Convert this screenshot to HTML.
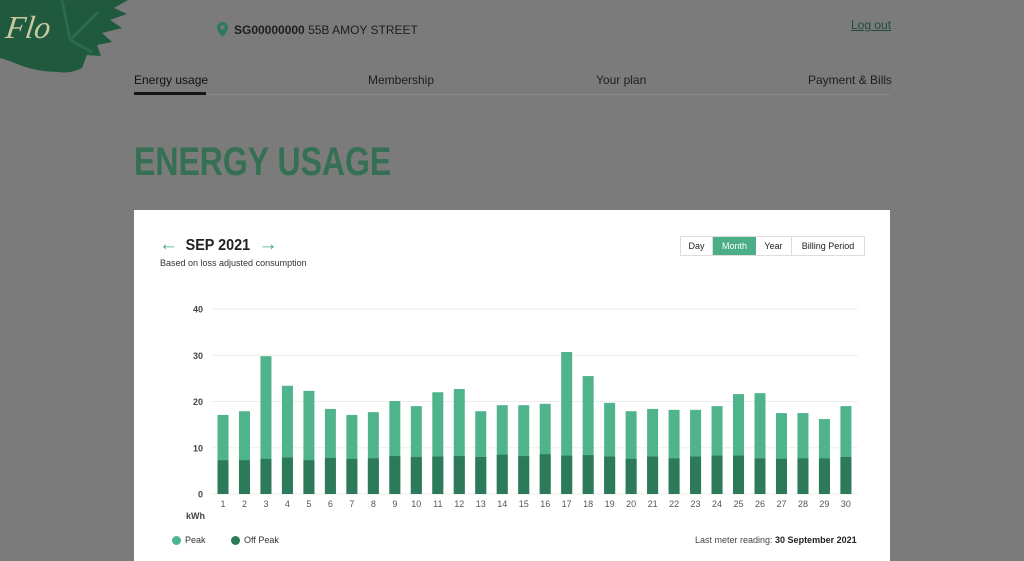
<!DOCTYPE html>
<html><head><meta charset="utf-8"><style>
*{margin:0;padding:0;box-sizing:border-box}
body{width:1024px;height:561px;overflow:hidden;background:#7b7b7b;font-family:"Liberation Sans",sans-serif;position:relative;color:#222}
.a{position:absolute;white-space:nowrap}
</style></head><body>
<svg class="a" style="left:0;top:0" width="130" height="75" viewBox="0 0 130 75">
<path d="M0 0 H128 L114 8 L127 14 L110 20 L122 28 L102 33 L112 42 L97 45 L101 56 L87 55 L82 68 Q70 74 58 72 Q40 72 22 66 Q8 60 0 58 Z" fill="#1f5a3e"/>
<path d="M62 0 L70 40 M70 40 L98 12 M70 40 L92 52" stroke="#2a6a4d" stroke-width="3" fill="none"/>
<text x="10" y="38" font-family="Liberation Serif,serif" font-style="italic" font-size="32" fill="#c9c7a0" transform="skewX(-8)">Flo</text>
</svg>
<svg class="a" style="left:217px;top:22px" width="11" height="15" viewBox="0 0 11 15"><path d="M5.5 0C2.5 0 0 2.4 0 5.4 0 9.5 5.5 15 5.5 15S11 9.5 11 5.4C11 2.4 8.5 0 5.5 0z" fill="#2f7a5c"/><circle cx="5.5" cy="5.3" r="2" fill="#7b7b7b"/></svg>
<div class="a" style="left:234px;top:23px;font-size:12px;color:#1e1e1e"><b>SG00000000</b> 55B AMOY STREET</div>
<div class="a" style="left:851px;top:18px;font-size:12px;color:#1f4d38;text-decoration:underline">Log out</div>
<div class="a" style="left:134px;top:73px;font-size:12px;color:#111">Energy usage</div>
<div class="a" style="left:368px;top:73px;font-size:12px;color:#1e1e1e">Membership</div>
<div class="a" style="left:596px;top:73px;font-size:12px;color:#1e1e1e">Your plan</div>
<div class="a" style="left:808px;top:73px;font-size:12px;color:#1e1e1e">Payment &amp; Bills</div>
<div class="a" style="left:134px;top:94px;width:756px;height:1px;background:#8a8a8a"></div>
<div class="a" style="left:134px;top:92px;width:72px;height:3px;background:#161616"></div>
<div class="a" style="left:134px;top:140px;font-size:40px;font-weight:bold;color:#356f54;transform:scaleX(0.8);transform-origin:0 0">ENERGY USAGE</div>
<div class="a" style="left:134px;top:210px;width:756px;height:351px;background:#fff"></div>
<div class="a" style="left:159px;top:234px;font-size:16px;font-weight:bold;color:#222"><span style="color:#3fa67e;font-size:19px">&#8592;</span> <span style="display:inline-block;transform:scaleX(0.9)">SEP 2021</span> <span style="color:#3fa67e;font-size:19px">&#8594;</span></div>
<div class="a" style="left:160px;top:258px;font-size:9px;color:#333">Based on loss adjusted consumption</div>
<div class="a" style="left:680px;top:236px;height:20px;border:1px solid #ddd;display:flex;font-size:9px;line-height:18px;color:#222">
<div style="width:32px;text-align:center;border-right:1px solid #ddd">Day</div>
<div style="width:43px;text-align:center;background:#4bae86;color:#fff">Month</div>
<div style="width:36px;text-align:center;border-right:1px solid #ddd">Year</div>
<div style="width:72px;text-align:center">Billing Period</div></div>
<svg id="ch" class="a" style="left:0;top:0" width="1024" height="561"></svg>
<div class="a" style="left:172px;top:536px;width:9px;height:9px;border-radius:50%;background:#4fb48b"></div>
<div class="a" style="left:185px;top:535px;font-size:9px;color:#333">Peak</div>
<div class="a" style="left:231px;top:536px;width:9px;height:9px;border-radius:50%;background:#2d7a5b"></div>
<div class="a" style="left:244px;top:535px;font-size:9px;color:#333">Off Peak</div>
<div class="a" style="left:695px;top:535px;font-size:9px;color:#444">Last meter reading: <b style="color:#222">30 September 2021</b></div>
<script>
var t=[17.1,17.9,29.8,23.4,22.3,18.4,17.1,17.7,20.1,19,22,22.7,17.9,19.2,19.2,19.5,30.7,25.5,19.7,17.9,18.4,18.2,18.2,19,21.6,21.8,17.5,17.5,16.2,19];
var o=[7.3,7.3,7.6,7.9,7.3,7.8,7.6,7.7,8.2,8,8.1,8.2,8,8.5,8.2,8.6,8.3,8.4,8.1,7.6,8.1,7.7,8.1,8.3,8.3,7.7,7.6,7.7,7.7,8];
var s='',k=4.625,b=494;
[0,10,20,30,40].forEach(function(v){var y=b-v*k;s+='<line x1="212" x2="858" y1="'+y+'" y2="'+y+'" stroke="#eee"/><text x="203" y="'+(y+3.5)+'" font-size="9" text-anchor="end" fill="#444" font-weight="bold" font-family="Liberation Sans">'+v+'</text>';});
for(var i=0;i<30;i++){var cx=223+i*21.48;s+='<rect x="'+(cx-5.5)+'" y="'+(b-t[i]*k)+'" width="11" height="'+(t[i]*k)+'" fill="#4fb48b"/><rect x="'+(cx-5.5)+'" y="'+(b-o[i]*k)+'" width="11" height="'+(o[i]*k)+'" fill="#2d7a5b"/><text x="'+cx+'" y="507" font-size="9" text-anchor="middle" fill="#555" font-family="Liberation Sans">'+(i+1)+'</text>';}
s+='<text x="186" y="519" font-size="9" font-weight="bold" fill="#444" font-family="Liberation Sans">kWh</text>';
document.getElementById('ch').innerHTML=s;
</script>
</body></html>
